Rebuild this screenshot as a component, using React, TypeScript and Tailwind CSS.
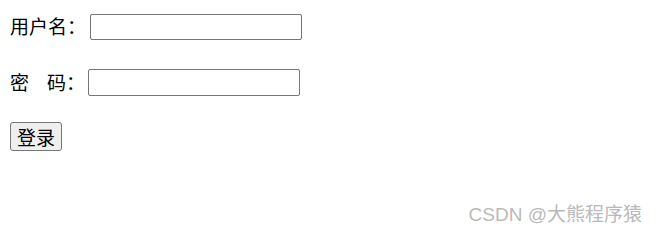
import React from "react";

export default function App() {
  const font = { fontFamily: '"Noto Sans CJK SC", "Noto Sans", sans-serif' };
  return (
    <div className="relative w-[658px] h-[234px] bg-white text-black" style={font}>
      <div className="flex flex-col pl-[10px] pt-[14px] text-[19px] leading-none">
        <div className="flex items-center h-[26px]">
          <span className="w-[80px] mb-[4px]">用户名：</span>
          <input className="w-[212px] h-[26px] border border-[#767676] rounded-[2px] outline-none" />
        </div>
        <div className="flex items-center h-[27px] mt-[29px]">
          <span className="w-[78px] flex mb-[3px]">
            <span className="w-[37px]">密</span>
            <span>码：</span>
          </span>
          <input className="w-[212px] h-[27px] border border-[#767676] rounded-[2px] outline-none" />
        </div>
        <div className="mt-[26px]">
          <button className="w-[52px] h-[29px] bg-[#efefef] border border-[#767676] rounded-[3px] text-[19px] leading-none">
            登录
          </button>
        </div>
      </div>
      <div className="absolute right-[16px] top-[205px] text-[19px] leading-none text-[#bababa]" style={{ fontFamily: '"Liberation Sans", "Noto Sans CJK SC", sans-serif' }}>
        CSDN @大熊程序猿
      </div>
    </div>
  );
}
